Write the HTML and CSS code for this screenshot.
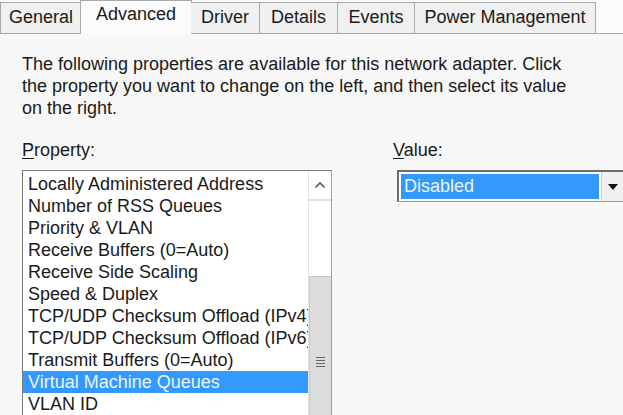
FILE: index.html
```html
<!DOCTYPE html>
<html>
<head>
<meta charset="utf-8">
<link rel="stylesheet" href="styles.css">
</head>
<body>
<div class="dialog">
  <div class="tabs">
    <div class="tab t-general">General</div>
    <div class="tab active t-advanced">Advanced</div>
    <div class="tab t-driver">Driver</div>
    <div class="tab t-details">Details</div>
    <div class="tab t-events">Events</div>
    <div class="tab t-power">Power Management</div>
  </div>
  <div class="panel">
    <p class="desc">The following properties are available for this network adapter. Click the property you want to change on the left, and then select its value on the right.</p>
    <div class="columns">
      <div class="col-left">
        <div class="label"><u>P</u>roperty:</div>
        <div class="listbox">
          <ul class="items">
            <li>Locally Administered Address</li>
            <li>Number of RSS Queues</li>
            <li>Priority &amp; VLAN</li>
            <li>Receive Buffers (0=Auto)</li>
            <li>Receive Side Scaling</li>
            <li>Speed &amp; Duplex</li>
            <li>TCP/UDP Checksum Offload (IPv4)</li>
            <li>TCP/UDP Checksum Offload (IPv6)</li>
            <li>Transmit Buffers (0=Auto)</li>
            <li class="selected">Virtual Machine Queues</li>
            <li>VLAN ID</li>
          </ul>
          <div class="scrollbar">
            <div class="sb-up">
              <svg width="12" height="8" viewBox="0 0 12 8"><path d="M1.5 6.5 L6 2 L10.5 6.5" fill="none" stroke="#555" stroke-width="1.6"/></svg>
            </div>
            <div class="sb-track"></div>
            <div class="sb-thumb">
              <div class="grip"><span></span><span></span><span></span><span></span></div>
            </div>
          </div>
        </div>
      </div>
      <div class="col-right">
        <div class="label"><u>V</u>alue:</div>
        <div class="combo">
          <div class="combo-text"><span class="combo-sel">Disabled</span></div>
          <div class="combo-btn">
            <svg width="12" height="8" viewBox="0 0 12 8"><path d="M1 1 L11 1 L6 7 Z" fill="#111"/></svg>
          </div>
        </div>
      </div>
    </div>
  </div>
</div>
</body>
</html>
```

FILE: styles.css
```css
html, body {
  margin: 0;
  padding: 0;
}
body {
  width: 623px;
  height: 415px;
  overflow: hidden;
  background: #f7f7f7;
  font-family: "Liberation Sans", Arial, sans-serif;
  font-size: 18px;
  color: #1a1a1a;
}
.dialog {
  width: 623px;
  height: 415px;
  overflow: hidden;
}
.tabs {
  display: flex;
  align-items: flex-end;
  height: 33px;
  background: #fbfbfb;
  position: relative;
  z-index: 1;
}
.tab {
  flex: 0 0 auto;
  box-sizing: border-box;
  height: 31px;
  border: 1px solid #a9a9a9;
  border-bottom: none;
  border-right: none;
  background: #f0f0f0;
  display: flex;
  align-items: center;
  justify-content: center;
  padding-bottom: 1px;
  white-space: nowrap;
}
.tab.t-power {
  border-right: 1px solid #a9a9a9;
}
.t-general { width: 81px; border-left: 1px solid #a9a9a9; }
.t-driver { width: 68px; border-left: none; }
.t-details { width: 78px; }
.t-events { width: 77px; }
.t-power { width: 182px; }
.tab.active {
  height: 34px;
  margin-bottom: -1px;
  background: #fbfbfb;
  border: 1px solid #a9a9a9;
  border-bottom: none;
  padding-bottom: 7px;
  margin-left: -1px;
  margin-right: -1px;
  width: 112px;
}
.panel {
  border-top: 1px solid #a9a9a9;
  padding: 19px 0 0 22px;
}
.desc {
  margin: 0;
  width: 552px;
  line-height: 22px;
}
.columns {
  display: flex;
  margin-top: 20px;
}
.col-left {
  flex: 0 0 310px;
  width: 310px;
  min-width: 0;
}
.col-right {
  flex: 0 0 auto;
  margin-left: 61px;
}
.label {
  height: 22px;
  line-height: 22px;
}
.label u {
  text-decoration-thickness: 1px;
  text-underline-offset: 2px;
}
.listbox {
  margin-top: 9px;
  box-sizing: border-box;
  width: 310px;
  height: 260px;
  border: 1px solid #7a7a7a;
  border-right-color: #a0a0a0;
  background: #fff;
  display: flex;
}
.items {
  list-style: none;
  margin: 0;
  padding: 2px 0 0 0;
  flex: 1;
  min-width: 0;
  overflow: hidden;
}
.items li {
  height: 22px;
  line-height: 22px;
  padding-left: 5px;
  white-space: nowrap;
  overflow: hidden;
}
.items li.selected {
  background: #3399ff;
  color: #eaf4ff;
}
.scrollbar {
  flex: 0 0 22px;
  border-left: 1px solid #e4e4e4;
  display: flex;
  flex-direction: column;
  background: #fff;
}
.sb-up {
  height: 28px;
  display: flex;
  align-items: center;
  justify-content: center;
  border-bottom: 2px solid #e0e0e0;
}
.sb-track {
  height: 75px;
  background: #fff;
}
.sb-thumb {
  flex: 1;
  background: #dcdcdc;
  border: 1px solid #c8c8c8;
  border-right: none;
  display: flex;
  justify-content: center;
  padding-top: 80px;
}
.grip {
  display: flex;
  flex-direction: column;
  gap: 2px;
}
.grip span {
  display: block;
  width: 9px;
  height: 1px;
  background: #666;
}
.combo {
  margin-top: 9px;
  margin-left: 4px;
  height: 32px;
  box-sizing: border-box;
  border: 1px solid #9a9a9a;
  border-top: 2px solid #6d6d6d;
  border-left: 2px solid #6d6d6d;
  background: #fff;
  display: flex;
  width: 240px;
}
.combo-text {
  flex: 0 0 202px;
  padding: 2px;
  box-sizing: border-box;
}
.combo-sel {
  display: flex;
  align-items: center;
  height: 100%;
  background: #3399ff;
  color: #eaf4ff;
  padding-left: 3px;
}
.combo-btn {
  flex: 0 0 22px;
  display: flex;
  align-items: center;
  justify-content: center;
  background: #f0f0f0;
  border-left: 1px solid #d0d0d0;
}
```
